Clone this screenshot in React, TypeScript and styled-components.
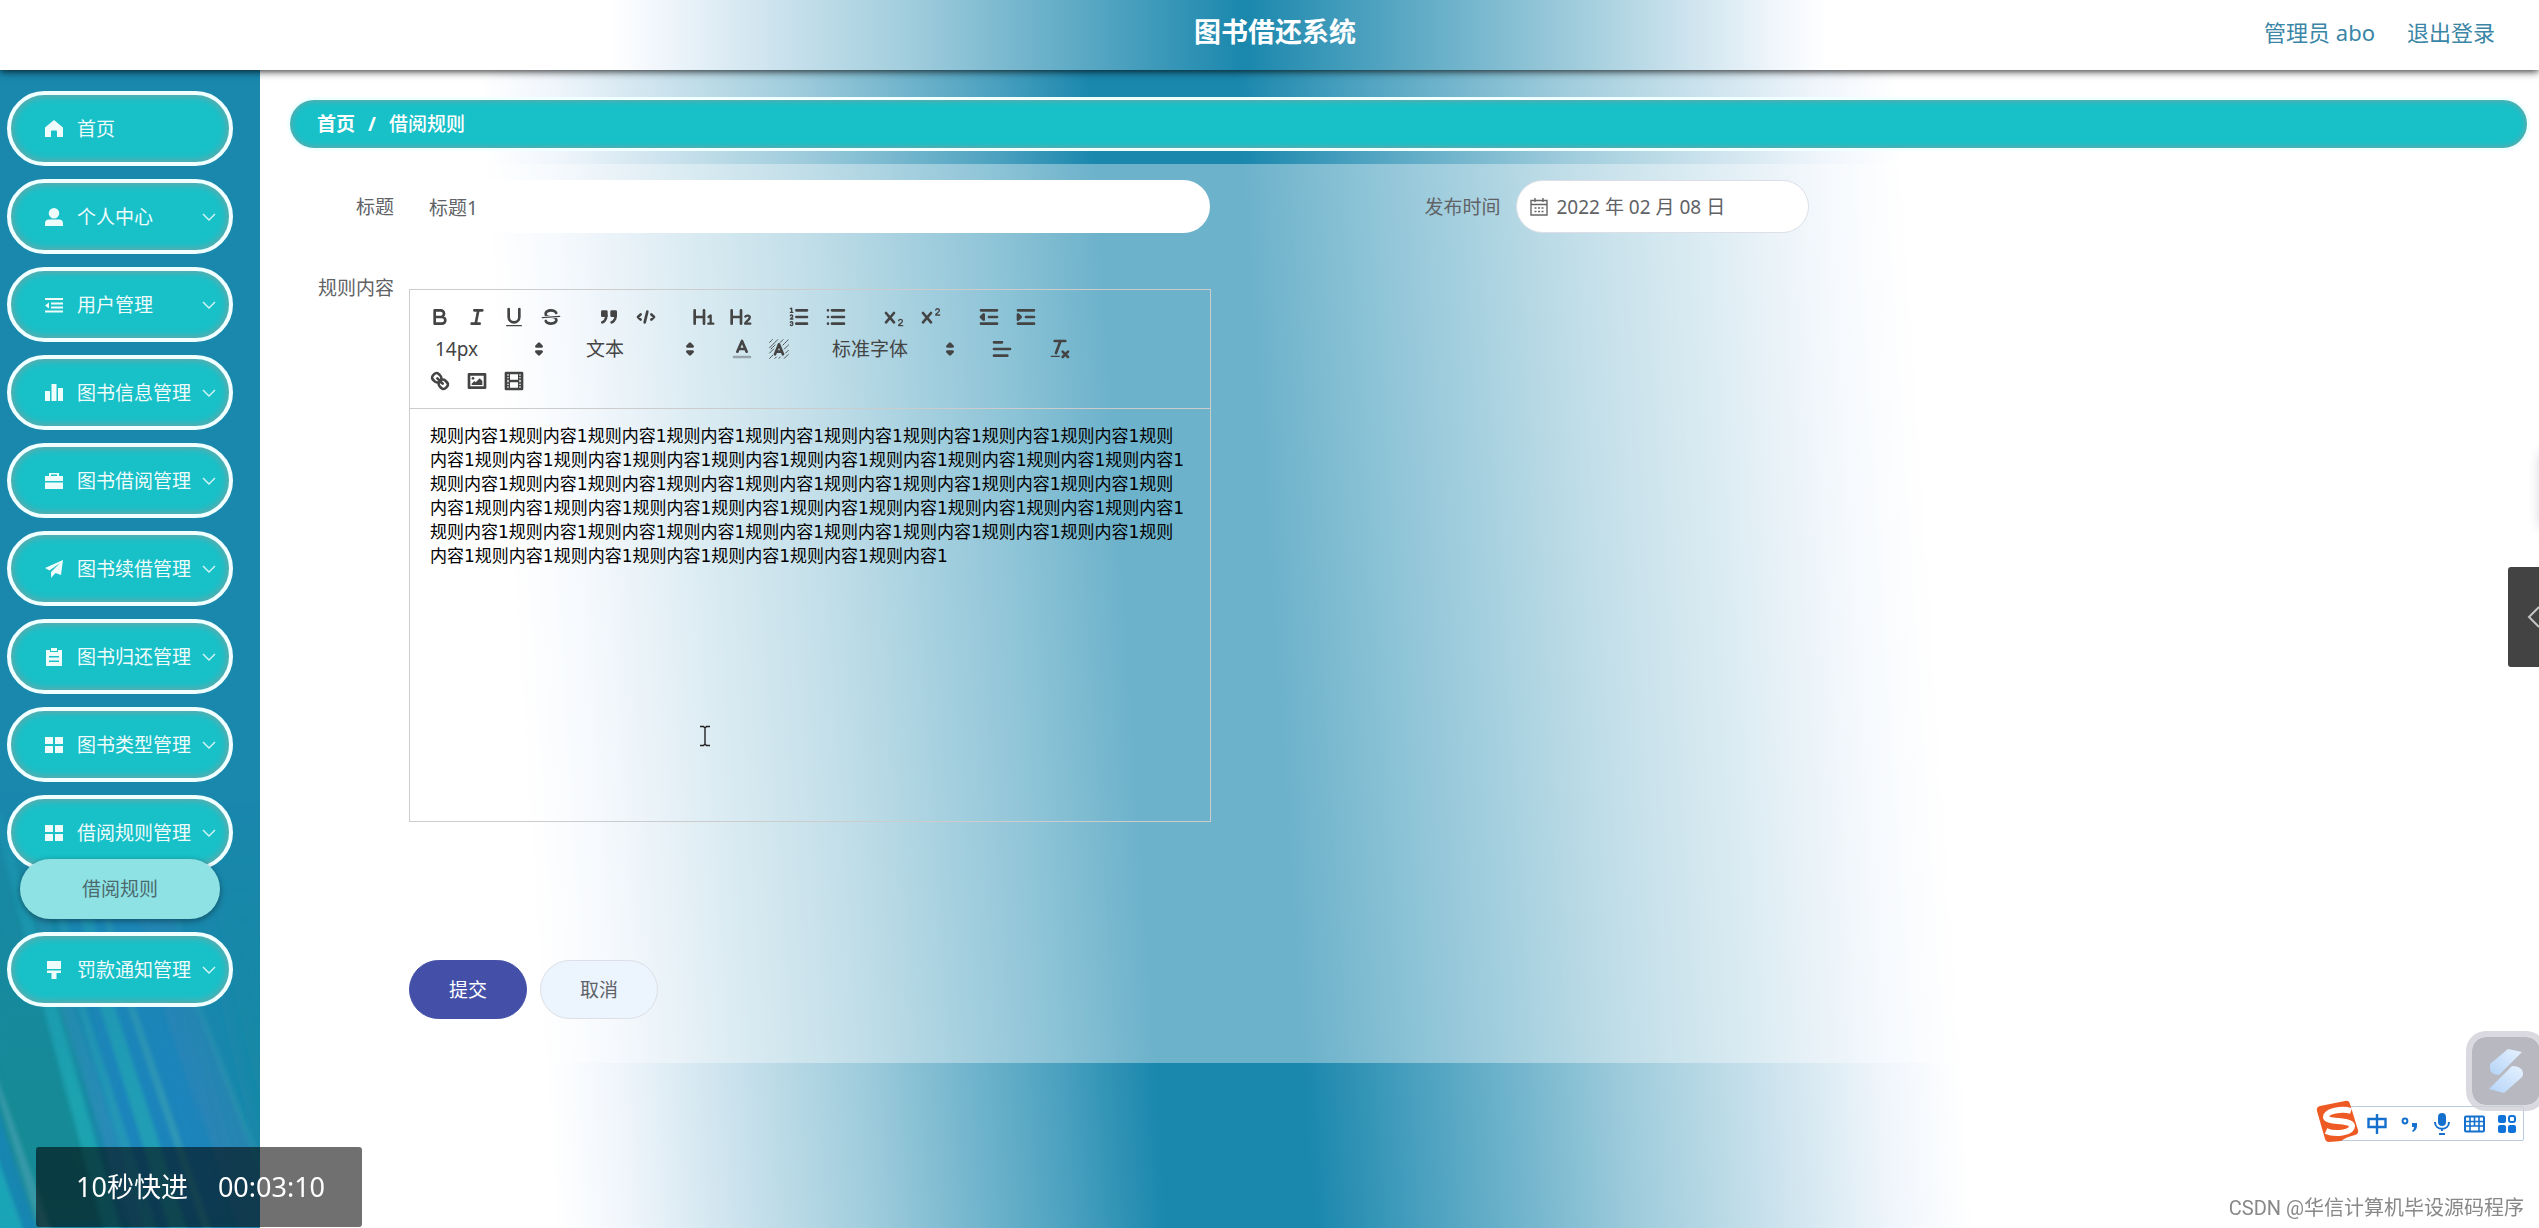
import React from "react";
import styled, { createGlobalStyle, css } from "styled-components";

const GlobalStyle = createGlobalStyle`
  *, *::before, *::after { box-sizing: border-box; }
  body {
    margin: 0;
    overflow: hidden;
    background: #fff;
    color: #606266;
    font-family: "Noto Sans", "Noto Sans CJK SC", sans-serif;
    font-size: 19px;
    line-height: 28px;
  }
  button, input, select, textarea { font: inherit; color: inherit; }
  a { color: inherit; text-decoration: none; }
`;

/* ---------- frame ---------- */

const Page = styled.div`
  position: relative;
  display: flex;
  flex-direction: column;
  min-height: 100vh;
`;

const Header = styled.header`
  position: relative;
  z-index: 2;
  display: grid;
  grid-template-columns: 1fr auto 1fr;
  align-items: center;
  height: 70px;
  padding: 0 44px 6px 55px;
  background: linear-gradient(90deg, #fff 24%, #f1f6fc 26%, #9fccdc 36%, #1a87ad 49%, #9fccdc 62%, #f1f6fc 70%, #fff 72%);
  box-shadow: 0 1px 8px rgba(0, 0, 0, 0.9);
`;

const Title = styled.h1`
  grid-column: 2;
  margin: 0;
  color: #fff;
  font-size: 27px;
  line-height: 40px;
  font-weight: 700;
`;

const UserLinks = styled.nav`
  display: flex;
  justify-content: flex-end;
  gap: 32px;
  color: #3b86a6;
  font-size: 22px;
`;

const Body = styled.div`
  display: flex;
  flex: 1;
`;

/* ---------- sidebar ---------- */

const Sidebar = styled.aside`
  position: relative;
  flex: 0 0 260px;
  min-width: 0;
  padding: 21px 27px 0 7px;
  background: #1a87ad;
`;

const Rays = styled.svg`
  position: absolute;
  left: 0;
  bottom: 0;
  width: 100%;
  height: 500px;
`;

const Menu = styled.ul`
  position: relative;
  display: flex;
  flex-direction: column;
  gap: 13px;
  margin: 0;
  padding: 0;
  list-style: none;
`;

const MenuButton = styled.button`
  display: flex;
  align-items: center;
  width: 100%;
  height: 75px;
  padding: 0 13px 0 34px;
  border: 4px solid #f0ffff;
  border-radius: 38px;
  background: #18c0c8;
  box-shadow: inset 0 0 8px #8f9a97;
  color: #effcfc;
  text-align: left;
  white-space: nowrap;

  svg { flex: none; }
`;

const MenuText = styled.span`
  flex: 1;
  padding-left: 14px;
`;

const SubItem = styled.a`
  position: relative;
  display: block;
  margin: -11px 13px 0;
  border-radius: 30px;
  background: #8ee2e4;
  box-shadow: 0 2px 6px rgba(0, 0, 0, 0.4);
  color: #4c6a6e;
  line-height: 60px;
  text-align: center;
`;

/* ---------- content ---------- */

const Main = styled.main`
  flex: 1;
  min-width: 0;
  padding: 27px 9px 0 27px;
  background: linear-gradient(86.2deg, #fff 12.5%, #f1f6fc 15.5%, #9fccdc 26%, #4fa3c1 34%, #1a87ad 38.5%, #1a87ad 44.7%, #4fa3c1 50%, #9fccdc 58.5%, #f1f6fc 69.5%, #fff 72.8%);
`;

const Crumbs = styled.nav`
  display: flex;
  align-items: center;
  gap: 13px;
  height: 54px;
  padding: 0 27px;
  border: 3px solid #f0ffff;
  border-radius: 27px;
  background: #18c0c8;
  box-shadow: inset 0 0 6px #8f9a97;
  color: #fff;
  font-weight: 700;
`;

const CurrentCrumb = styled.span`
  font-weight: 500;
`;

const Panel = styled.form`
  margin-top: 13px;
  padding: 16px 15px 44px;
  background: rgba(255, 255, 255, 0.36);
`;

const FormRow = styled.div`
  display: grid;
  grid-template-columns: 1fr 1fr;
  margin-bottom: 27px;
`;

const Field = styled.div`
  display: flex;
`;

const Label = styled.label`
  flex: 0 0 107px;
  padding-right: 15px;
  line-height: 54px;
  text-align: right;
  white-space: nowrap;
`;

const TitleInput = styled.input`
  width: 801px;
  height: 53px;
  padding: 0 20px;
  border: 0;
  border-radius: 27px;
  background: #fff;
`;

const DateBox = styled.div`
  display: flex;
  align-items: center;
  gap: 9px;
  width: 293px;
  height: 53px;
  padding: 0 13px;
  border: 1px solid #dcdfe6;
  border-radius: 27px;
  background: #fff;

  svg { flex: none; }
`;

const DateInput = styled.input`
  width: 100%;
  padding: 0;
  border: 0;
  background: none;
`;

/* ---------- rich text editor ---------- */

const Editor = styled.div`
  width: 802px;
  margin-top: 28px;
  border: 1px solid #ccc;
`;

const Toolbar = styled.div`
  display: flex;
  flex-wrap: wrap;
  padding: 11px;
  border-bottom: 1px solid #ccc;
  color: #444;
`;

const ToolGroup = styled.div`
  display: flex;
  margin-right: 21px;
`;

const toolHeight = css`
  height: 32px;
`;

const ToolButton = styled.button`
  ${toolHeight}
  display: grid;
  place-items: center;
  width: 37px;
  padding: 0;
  border: 0;
  background: none;
`;

const Picker = styled.div<{ $wide?: boolean }>`
  ${toolHeight}
  display: grid;
  align-items: center;
  width: ${(p) => (p.$wide ? 144 : 130)}px;

  > * { grid-area: 1 / 1; }
  > svg { justify-self: end; pointer-events: none; }
`;

const PickerSelect = styled.select`
  width: 100%;
  padding: 0 0 0 14px;
  border: 0;
  background: none;
  appearance: none;
`;

const EditorText = styled.textarea`
  display: block;
  width: 100%;
  height: 412px;
  padding: 15px 20px;
  border: 0;
  outline: 0;
  resize: none;
  overflow: hidden;
  background: none;
  color: #000;
  font-family: "DejaVu Sans", "Noto Sans CJK SC", sans-serif;
  font-size: 17px;
  line-height: 24px;
`;

const Actions = styled.div`
  display: flex;
  gap: 13px;
  margin: 138px 0 0 107px;
`;

const ActionButton = styled.button<{ $primary?: boolean }>`
  width: 118px;
  height: 59px;
  border: 1px solid ${(p) => (p.$primary ? "#4450a8" : "#dcdfe6")};
  border-radius: 30px;
  background: ${(p) => (p.$primary ? "#4450a8" : "#ecf4fe")};
  color: ${(p) => (p.$primary ? "#fff" : "#606266")};
`;

/* ---------- floating layers ---------- */

const Toast = styled.div`
  position: fixed;
  left: 36px;
  bottom: 1px;
  z-index: 5;
  display: flex;
  align-items: center;
  gap: 30px;
  height: 80px;
  padding: 0 37px 0 40px;
  border-radius: 3px;
  background: rgba(0, 0, 0, 0.56);
  color: #fff;
  font-size: 27px;
  line-height: 40px;
`;

const DrawerTab = styled.button`
  position: fixed;
  right: 0;
  top: 567px;
  z-index: 5;
  display: flex;
  align-items: center;
  justify-content: flex-end;
  width: 31px;
  height: 100px;
  padding: 0;
  border: 0;
  border-radius: 3px 0 0 3px;
  background: #434343;
`;

const HiddenCard = styled.div`
  position: fixed;
  right: -21px;
  top: 450px;
  width: 20px;
  height: 80px;
  border-radius: 12px;
  box-shadow: 0 0 12px rgba(60, 70, 110, 0.25);
`;

const AppBadge = styled.button`
  position: fixed;
  right: -7px;
  bottom: 117px;
  z-index: 6;
  display: grid;
  place-items: center;
  width: 80px;
  height: 80px;
  padding: 0;
  border: 6px solid rgba(207, 208, 215, 0.8);
  border-radius: 20px;
  background: #b8b9c0;
  background-clip: padding-box;
`;

const ImeBar = styled.div`
  position: fixed;
  right: 15px;
  bottom: 87px;
  z-index: 5;
  display: flex;
  align-items: center;
  gap: 13px;
  height: 35px;
  padding: 0 7px 0 28px;
  border: 1px solid #b9cbdc;
  border-radius: 2px;
  background: #fff;
`;

const ImeLogo = styled.svg`
  position: absolute;
  left: -23px;
  top: -7px;
`;

const Watermark = styled.div`
  position: fixed;
  right: 15px;
  bottom: 6px;
  color: #888;
  font-family: Roboto, "Noto Sans CJK SC", sans-serif;
  font-size: 20px;
`;

const TextPointer = styled.svg`
  position: absolute;
  left: 699px;
  top: 725px;
  pointer-events: none;
`;

/* ---------- icons ---------- */

const MenuIcon = ({ children }: { children: React.ReactNode }) => (
  <svg width="18" height="18" viewBox="0 0 18 18" fill="#effcfc" aria-hidden="true">
    {children}
  </svg>
);

const Chevron = () => (
  <svg width="14" height="14" viewBox="0 0 14 14" fill="none" stroke="#d9f7f7" strokeWidth="1.4" aria-hidden="true">
    <path d="M1 4l6 6 6-6" />
  </svg>
);

const gridIcon = <path d="M0 1h8v7H0zM10 1h8v7h-8zM0 10h8v7H0zM10 10h8v7h-8z" />;

const menu: { text: string; icon: React.ReactNode; leaf?: boolean; child?: string }[] = [
  { text: "首页", leaf: true, icon: <path d="M9 0l9 7.500V17h-6v-5.500a1 1 0 0 0-1-1H7a1 1 0 0 0-1 1V17H0V7.500z" /> },
  { text: "个人中心", icon: <path d="M9 0a5 5 0 0 1 0 10.500A5 5 0 0 1 9 0zM4 11.500h10a4 4 0 0 1 4 4V18H0v-2.500a4 4 0 0 1 4-4z" /> },
  { text: "用户管理", icon: <path d="M0 2h18v2H0zM6 6.500h12v2H6zM6 10.500h12v2H6zM0 14.500h18v2H0zM0 9.500l4-3v6z" /> },
  { text: "图书信息管理", icon: <path d="M0 7h5v10H0zM6.500 0h5v17h-5zM13 4h5v13h-5z" /> },
  { text: "图书借阅管理", icon: <path fillRule="evenodd" d="M4 4V1h10v3h4v5H0V4zM6 4h6V2.500H6zM0 10.500h18V17H0z" /> },
  { text: "图书续借管理", icon: <path d="M18 0l-2 15-5.500-2L6 18v-6L15 3 4.500 10.500 0 8z" /> },
  { text: "图书归还管理", icon: <path fillRule="evenodd" d="M1 2h4v2h8V2h4v16H1zM6 0h6v3H6zM4 8v1.500h10V8zM4 12.500V14h10v-1.500z" /> },
  { text: "图书类型管理", icon: gridIcon },
  { text: "借阅规则管理", icon: gridIcon, child: "借阅规则" },
  { text: "罚款通知管理", icon: <path d="M2 0h14v8H2zM2 9.500h14V12h-4.500v6h-5v-6H2z" /> },
];

const ToolIcon = ({ children }: { children: React.ReactNode }) => (
  <svg
    width="24"
    height="24"
    viewBox="0 0 18 18"
    fill="none"
    stroke="#444"
    strokeWidth="2"
    strokeLinecap="round"
    strokeLinejoin="round"
    aria-hidden="true"
  >
    {children}
  </svg>
);

const solid = { fill: "#444", stroke: "none" };

const crossStrokes = <path d="M3 6l6 7M9 6l-6 7" />;

const icons: Record<string, React.ReactNode> = {
  加粗: <path d="M5 4h4.500a2.500 2.500 0 0 1 0 5H5zM5 9h5.500a2.500 2.500 0 0 1 0 5H5z" />,
  斜体: <path d="M7 4h6M5 14h6M8 14l2-10" />,
  下划线: (
    <>
      <path d="M5 3v6a4 4 0 0 0 8 0V3" />
      <rect {...solid} x="3" y="15" width="12" height="1" rx="0.5" />
    </>
  ),
  删除线: (
    <>
      <path strokeWidth="1" d="M15.500 8.500l-13 1" />
      <path {...solid} d="M9.007 8C6.542 7.791 6 7.519 6 6.500 6 5.792 7.283 5 9 5c1.571 0 2.765.679 2.969 1.309a1 1 0 0 0 1.900-.617C13.356 4.106 11.354 3 9 3 6.200 3 4 4.538 4 6.500a3.200 3.200 0 0 0 .5 1.843z" />
      <path {...solid} d="M8.984 10C11.457 10.208 12 10.479 12 11.500c0 .708-1.283 1.500-3 1.500-1.571 0-2.765-.679-2.969-1.309a1 1 0 1 0-1.900.617C4.644 13.894 6.646 15 9 15c2.800 0 5-1.538 5-3.500a3.200 3.200 0 0 0-.5-1.843z" />
    </>
  ),
  引用: (
    <>
      <rect fill="#444" x="4" y="5" width="3" height="3" />
      <rect fill="#444" x="11" y="5" width="3" height="3" />
      <path fill="#444" d="M7 8c0 4.031-3 5-3 5M14 8c0 4.031-3 5-3 5" />
    </>
  ),
  代码: <path d="M5 7L3 9l2 2M13 7l2 2-2 2M10 5L8 13" />,
  一级标题: (
    <>
      <path d="M2 4v10M9 4v10M2 9h7" />
      <path strokeWidth="1.7" d="M12.400 9l1.600-1.200V14M12.200 14h3.800" />
    </>
  ),
  二级标题: (
    <>
      <path d="M2 4v10M9 4v10M2 9h7" />
      <path strokeWidth="1.7" d="M12.200 8.700c.8-1.200 3.500-1 3.400.8-.1 1.700-3.200 2.600-3.500 4.500h3.900" />
    </>
  ),
  有序列表: (
    <>
      <path d="M7 4h8M7 9h8M7 14h8" />
      <path strokeWidth="1" d="M2.500 5.500h2M2.500 2.800l1-.4v3M4.500 10.500h-2c0-.234 1.850-1.076 1.850-2.234a.959.959 0 0 0-1.850-.11M2.500 14.846a.959.959 0 0 0 1.850-.109.700.700 0 0 0-.6-.737.688.688 0 0 0 .6-.736.959.959 0 0 0-1.850-.109" />
    </>
  ),
  无序列表: <path d="M6 4h9M6 9h9M6 14h9M3 4h0M3 9h0M3 14h0" />,
  下标: (
    <>
      {crossStrokes}
      <path strokeWidth="1" d="M12.500 11.800c.4-1.400 2.800-1.300 2.800.2 0 1.600-2.700 2.200-2.800 3.500h3" />
    </>
  ),
  上标: (
    <>
      {crossStrokes}
      <path strokeWidth="1" d="M12.500 3.800c.4-1.400 2.800-1.300 2.800.2 0 1.600-2.700 2.200-2.800 3.500h3" />
    </>
  ),
  减少缩进: (
    <>
      <path d="M3 14h12M3 4h12M9 9h6" />
      <path fill="#444" d="M5 7v4L3 9z" />
    </>
  ),
  增加缩进: (
    <>
      <path d="M3 14h12M3 4h12M9 9h6" />
      <path fill="#444" d="M3 7v4l2-2z" />
    </>
  ),
  字体颜色: (
    <>
      <path opacity="0.4" d="M3 15h12" />
      <path d="M5.500 11L9 3l3.500 8M11.630 9H6.380" />
    </>
  ),
  背景颜色: (
    <>
      <path strokeWidth="0.7" strokeDasharray="1.4 0.6" d="M2 4l2-2M2 8l6-6M2 12l3-3M2 16l2.500-2.500M10 4l2-2M12 6l4-4M13 9l3-3M14 12l2-2M13 16l3-3M6 16l1-1M9 16l1-1M3 9l3-3" />
      <path d="M6 13L9 5.500l3 7.500M11.300 11H6.700" />
    </>
  ),
  对齐: <path d="M3 9h12M3 14h10M3 4h6" />,
  清除格式: (
    <>
      <path d="M5 3h8M6 12l3.350-9M11 11l4 4M15 11l-4 4" />
      <rect {...solid} x="2" y="14" width="7" height="1" rx="0.5" />
    </>
  ),
  链接: (
    <path d="M7 7l4 4M8.900 4.577a3.476 3.476 0 0 1 .36 4.679A3.476 3.476 0 0 1 4.577 8.900C3.185 7.500 2.035 6.400 4.217 4.217S7.500 3.185 8.900 4.577zM13.423 9.100a3.476 3.476 0 0 0-4.679-.36 3.476 3.476 0 0 0 .36 4.679c1.392 1.392 2.500 2.542 4.679.36S14.815 10.500 13.423 9.100z" />
  ),
  图片: (
    <>
      <rect x="3" y="4" width="12" height="10" />
      <circle {...solid} cx="6" cy="7" r="1" />
      <path {...solid} d="M5 12v-1l2-2 1 1 3-3 2 2v3z" />
    </>
  ),
  视频: (
    <>
      <rect x="3" y="3" width="12" height="12" />
      <path {...solid} d="M5 3h1v12H5zM12 3h1v12h-1zM5 8h8v2H5zM3 5h3v1H3zM3 7h3v1H3zM3 10h3v1H3zM3 12h3v1H3zM12 5h3v1h-3zM12 7h3v1h-3zM12 10h3v1h-3zM12 12h3v1h-3z" />
    </>
  ),
};

const Tools = ({ names }: { names: string[] }) => (
  <ToolGroup>
    {names.map((name) => (
      <ToolButton key={name} type="button" aria-label={name}>
        <ToolIcon>{icons[name]}</ToolIcon>
      </ToolButton>
    ))}
  </ToolGroup>
);

const Dropdown = ({ label, value, wide }: { label: string; value: string; wide?: boolean }) => (
  <ToolGroup>
    <Picker $wide={wide}>
      <PickerSelect aria-label={label}>
        <option>{value}</option>
      </PickerSelect>
      <ToolIcon>
        <path fill="#444" d="M7 11l2 2 2-2zM7 7l2-2 2 2z" />
      </ToolIcon>
    </Picker>
  </ToolGroup>
);

const SidebarRays = () => (
  <Rays viewBox="0 0 260 500" preserveAspectRatio="none" aria-hidden="true">
    <defs>
      <filter id="soft" x="-30%" y="-10%" width="160%" height="120%">
        <feGaussianBlur stdDeviation="2" />
      </filter>
      <filter id="softer" x="-40%" y="-20%" width="180%" height="140%">
        <feGaussianBlur stdDeviation="12" />
      </filter>
      <linearGradient id="fade" x1="0" y1="0" x2="0" y2="1">
        <stop offset="0" stopColor="#fff" stopOpacity="0" />
        <stop offset="0.75" stopColor="#fff" stopOpacity="1" />
      </linearGradient>
      <mask id="reveal">
        <rect width="260" height="500" fill="url(#fade)" />
      </mask>
    </defs>
    <g mask="url(#reveal)">
      <path filter="url(#softer)" fill="#148a96" d="M-20 90h60l80 410H-20z" />
      <path filter="url(#softer)" fill="#1a84bb" d="M60 150h90l90 350H120z" />
      <path filter="url(#softer)" fill="#1388a4" d="M190 100h90v400z" />
      <g filter="url(#soft)" opacity="0.8">
        <path fill="#1fb2bd" opacity="0.8" d="M-6 90l8-6 54 190 66 230h-18L46 290z" />
        <path fill="#2f8fb8" opacity="0.8" d="M18 120h10l46 160 74 224h-16L60 280z" />
        <path fill="#2ba5b4" opacity="0.7" d="M52 160h8l26 120 72 224h-12L78 280z" />
        <path fill="#24a9b4" opacity="0.9" d="M74 160h12l26 110 76 234h-18L100 280z" />
        <path fill="#3fa6b0" opacity="0.7" d="M96 160h6l30 110 80 234h-8L128 280z" />
        <path fill="#3b84b8" opacity="0.5" d="M130 160h36l30 110 74 200v34h-30L170 300z" />
        <path fill="#3a9db2" opacity="0.5" d="M170 170h4l28 110 62 160v16L196 280z" />
        <path fill="#1684ba" opacity="0.9" d="M-6 370l44 134H-6z" />
        <path fill="#1eafc0" opacity="0.9" d="M-6 420l30 84H-6z" />
        <path fill="#4ba2b3" opacity="0.8" d="M-6 340v14l46 150h12z" />
      </g>
    </g>
  </Rays>
);

const content = "规则内容1".repeat(54);

const App = () => (
  <>
    <GlobalStyle />
    <Page>
      <Header>
        <Title>图书借还系统</Title>
        <UserLinks>
          <a href="#profile">管理员 abo</a>
          <a href="#logout">退出登录</a>
        </UserLinks>
      </Header>
      <Body>
        <Sidebar>
          <SidebarRays />
          <Menu>
            {menu.map((item) => (
              <li key={item.text}>
                <MenuButton type="button">
                  <MenuIcon>{item.icon}</MenuIcon>
                  <MenuText>{item.text}</MenuText>
                  {!item.leaf && <Chevron />}
                </MenuButton>
                {item.child && <SubItem href="#rules">{item.child}</SubItem>}
              </li>
            ))}
          </Menu>
        </Sidebar>
        <Main>
          <Crumbs>
            <a href="#home">首页</a>
            <span>/</span>
            <CurrentCrumb>借阅规则</CurrentCrumb>
          </Crumbs>
          <Panel>
            <FormRow>
              <Field>
                <Label htmlFor="title">标题</Label>
                <TitleInput id="title" defaultValue="标题1" />
              </Field>
              <Field>
                <Label htmlFor="date">发布时间</Label>
                <DateBox>
                  <svg width="18" height="18" viewBox="0 0 18 18" fill="none" stroke="#666" strokeWidth="1.4" aria-hidden="true">
                    <path d="M1 2.500h16v14.500H1zM1 6.500h16M5 0v4M13 0v4M4.500 10h2M8 10h2M11.500 10h2M4.500 13.500h2M8 13.500h2M11.500 13.500h2" />
                  </svg>
                  <DateInput id="date" defaultValue="2022 年 02 月 08 日" />
                </DateBox>
              </Field>
            </FormRow>
            <Field>
              <Label htmlFor="content">规则内容</Label>
              <Editor>
                <Toolbar>
                  <Tools names={["加粗", "斜体", "下划线", "删除线"]} />
                  <Tools names={["引用", "代码"]} />
                  <Tools names={["一级标题", "二级标题"]} />
                  <Tools names={["有序列表", "无序列表"]} />
                  <Tools names={["下标", "上标"]} />
                  <Tools names={["减少缩进", "增加缩进"]} />
                  <Dropdown label="字号" value="14px" />
                  <Dropdown label="段落" value="文本" />
                  <Tools names={["字体颜色", "背景颜色"]} />
                  <Dropdown label="字体" value="标准字体" wide />
                  <Tools names={["对齐"]} />
                  <Tools names={["清除格式"]} />
                  <Tools names={["链接", "图片", "视频"]} />
                </Toolbar>
                <EditorText id="content" spellCheck={false} defaultValue={content} />
              </Editor>
            </Field>
            <Actions>
              <ActionButton type="button" $primary>提交</ActionButton>
              <ActionButton type="button">取消</ActionButton>
            </Actions>
          </Panel>
        </Main>
      </Body>

      <TextPointer width="12" height="22" viewBox="0 0 12 22" fill="none" stroke="#222" strokeWidth="1.4" aria-hidden="true">
        <path d="M1 1.500h3.500L6 3l1.500-1.500H11M6 3v16M1 20.500h3.500L6 19l1.500 1.500H11" />
      </TextPointer>
      <HiddenCard />
      <DrawerTab type="button" aria-label="展开">
        <svg width="12" height="22" viewBox="0 0 12 22" fill="none" stroke="#c4c4c4" strokeWidth="2" aria-hidden="true">
          <path d="M12 1L2 11l10 10" />
        </svg>
      </DrawerTab>
      <AppBadge type="button" aria-label="助手">
        <svg width="36" height="46" viewBox="0 0 36 46" aria-hidden="true">
          <defs>
            <linearGradient id="badge" x1="0" y1="1" x2="1" y2="0">
              <stop offset="0" stopColor="#b4d3f7" />
              <stop offset="1" stopColor="#e6f2ff" />
            </linearGradient>
          </defs>
          <path fill="url(#badge)" d="M20 1l14 3L11 27C5 27 2 24 2 20V16z" />
          <path fill="url(#badge)" d="M16 45L1 41l23-23c7 0 11 3 11 8 0 2-1 3-2 4z" />
        </svg>
      </AppBadge>
      <ImeBar>
        <ImeLogo width="44" height="42" viewBox="0 0 44 42" aria-hidden="true">
          <path fill="#ee5a24" d="M4 6L29 1q4-1 5 3l8 26q1 4-3 5-9 2-14 6l-12 1q-3 0-4-3L1 11q-1-4 3-5z" />
          <path fill="none" stroke="#fff" strokeWidth="6" d="M35 11C26 8 10 11 10 17c0 6 25 2 26 9 0 7-17 9-26 5" />
        </ImeLogo>
        <svg width="20" height="20" viewBox="0 0 20 20" fill="none" stroke="#1470cc" strokeWidth="2.4" aria-hidden="true">
          <path d="M1.500 5h17v8h-17zM10 0v20" />
        </svg>
        <svg width="20" height="20" viewBox="0 0 20 20" fill="none" stroke="#1470cc" strokeWidth="2" aria-hidden="true">
          <circle cx="5" cy="7" r="2.400" />
          <path fill="#1470cc" stroke="none" d="M12 9h5v3c0 3-2 5-4 6l-1-1c1-1 2-2 2-4h-2z" />
        </svg>
        <svg width="18" height="22" viewBox="0 0 18 22" fill="none" stroke="#1470cc" strokeWidth="2" aria-hidden="true">
          <rect x="6" y="1" width="6" height="11" rx="3" fill="#1470cc" />
          <path d="M2 9c0 9 14 9 14 0M9 15v3M6 21h6" />
        </svg>
        <svg width="21" height="18" viewBox="0 0 21 18" fill="none" stroke="#1470cc" strokeWidth="2" aria-hidden="true">
          <rect x="1" y="1.500" width="19" height="15" rx="1" />
          <path strokeWidth="1.600" d="M1 6.500h19M1 11h19M6 1.500V17M10.500 1.500V11M15 1.500V17" />
        </svg>
        <svg width="18" height="18" viewBox="0 0 18 18" fill="#0f73d9" aria-hidden="true">
          <rect width="8" height="8" rx="2" />
          <rect y="10" width="8" height="8" rx="2" />
          <rect x="10" y="10" width="8" height="8" rx="2" />
          <rect x="11" y="1" width="6" height="6" rx="2" fill="none" stroke="#0f73d9" strokeWidth="2" />
        </svg>
      </ImeBar>
      <Toast>
        <span>10秒快进</span>
        <span>00:03:10</span>
      </Toast>
      <Watermark>CSDN @华信计算机毕设源码程序</Watermark>
    </Page>
  </>
);

export default App;
